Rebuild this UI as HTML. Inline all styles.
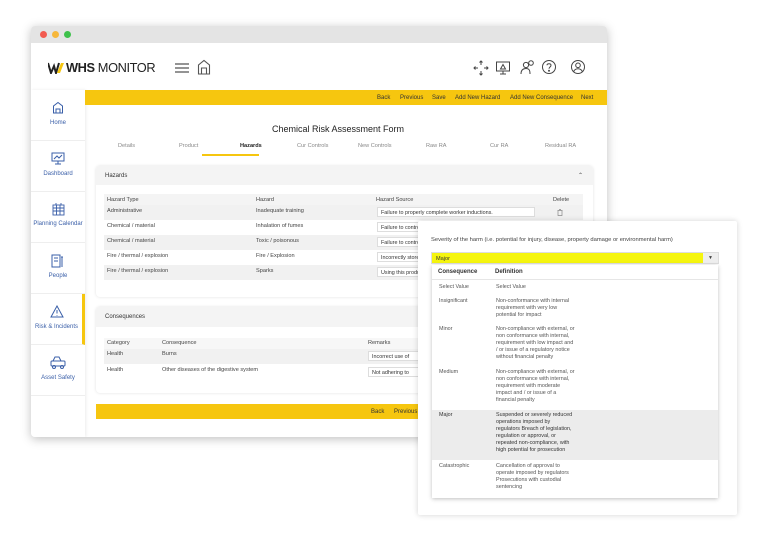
<!DOCTYPE html>
<html><head><meta charset="utf-8"><style>
*{margin:0;padding:0;box-sizing:border-box}
body{width:768px;height:541px;background:#fff;font-family:"Liberation Sans",sans-serif;position:relative;overflow:hidden;color:#444}
.a{position:absolute;white-space:nowrap}
.win{position:absolute;left:31px;top:26px;width:576px;height:411px;background:#fff;box-shadow:0 2px 10px rgba(0,0,0,.25);border-radius:4px;overflow:hidden}
.tb{position:absolute;left:0;top:0;width:576px;height:17px;background:#e4e4e4}
.dot{position:absolute;top:5px;width:7px;height:7px;border-radius:50%}
.side{position:absolute;left:0;top:64px;width:54px;height:347px;background:#fff;box-shadow:1px 0 3px rgba(0,0,0,.08)}
.si{position:absolute;left:0;width:54px;height:51px;border-bottom:1px solid #eee;text-align:center;font-size:6px;color:#3a5fa8}
.si span{position:absolute;left:0;right:0;bottom:14px}
.ybar{position:absolute;background:#f6c60f;font-size:6px;color:#333}
.card{position:absolute;background:#fff;border-radius:4px;box-shadow:0 0 3px rgba(0,0,0,.12)}
.ch{position:absolute;left:0;top:0;right:0;height:19px;background:#f4f4f4;font-size:6px;color:#333;padding:7px 0 0 9px;border-radius:4px 4px 0 0}
.t{font-size:5.6px;color:#444}
.row{position:absolute;left:8px;width:479px;height:15px;background:#f1f1f1}
.inp{position:absolute;height:10px;background:#fff;border:1px solid #ddd;font-size:5.4px;padding:2px 3px;color:#333;overflow:hidden;white-space:nowrap}
.pop{position:absolute;left:418px;top:221px;width:319px;height:294px;background:#fff;box-shadow:0 0 6px rgba(0,0,0,.18);border-radius:2px}
.dd{position:absolute;left:14px;top:44px;width:286px;height:233px;background:#fff;box-shadow:0 1px 4px rgba(0,0,0,.25)}
.p{font-size:5.4px;color:#555;line-height:7.1px}
</style></head><body>
<div class="win">
 <div class="tb"><div class="dot" style="left:9px;background:#f25b50"></div><div class="dot" style="left:21px;background:#f6b73b"></div><div class="dot" style="left:33px;background:#3ec14b"></div></div>
 <svg class="a" style="left:17px;top:36px" width="16" height="12" viewBox="0 0 16 12"><path d="M0 1 L3 11 L6 4 L8 11 L11 1" fill="none" stroke="#222" stroke-width="2"/><path d="M9 11 L13 1 L16 1 L12 11Z" fill="#f6c60f"/></svg>
 <div class="a" style="left:35px;top:34px;font-size:12.8px;color:#222;letter-spacing:-.4px"><b>WHS</b> MONITOR</div>
 <svg class="a" style="left:143px;top:36px" width="16" height="12"><path d="M1 2H15M1 6H15M1 10H15" stroke="#555" stroke-width="1.2"/></svg>
 <svg class="a" style="left:166px;top:33px" width="14" height="16"><path d="M1.5 15V6L7 1.5 12.5 6V15ZM4.5 15V9H9.5V15" fill="none" stroke="#555" stroke-width="1.1"/></svg>
 <svg class="a" style="left:442px;top:34px" width="16" height="16" fill="none" stroke="#444" stroke-width="1"><path d="M8 1V5M8 11V15M1 8H5M11 8H15M6.5 2.5 8 1 9.5 2.5M6.5 13.5 8 15 9.5 13.5M2.5 6.5 1 8 2.5 9.5M13.5 6.5 15 8 13.5 9.5"/></svg>
 <svg class="a" style="left:464px;top:34px" width="16" height="16" fill="none" stroke="#444" stroke-width="1"><rect x="1.5" y="2" width="13" height="9"/><path d="M8 11V14M5 14H11M8 4.5 10.5 9H5.5Z"/></svg>
 <svg class="a" style="left:488px;top:33px" width="16" height="16" fill="none" stroke="#444" stroke-width="1"><circle cx="7" cy="6" r="2.6"/><path d="M2 15C2 11 4 9.5 7 9.5S11 11 11 15"/><circle cx="12" cy="4" r="2.3"/></svg>
 <svg class="a" style="left:510px;top:33px" width="16" height="16" fill="none" stroke="#444" stroke-width="1"><circle cx="8" cy="8" r="6.5"/><path d="M6 6.3C6 4.3 10 4.3 10 6.3 10 8 8 8 8 9.8"/><circle cx="8" cy="11.8" r=".5" fill="#444"/></svg>
 <svg class="a" style="left:539px;top:33px" width="16" height="16" fill="none" stroke="#444" stroke-width="1"><circle cx="8" cy="8" r="6.5"/><circle cx="8" cy="6.3" r="2.3"/><path d="M3.6 12.6C4.6 10.5 6 9.8 8 9.8S11.4 10.5 12.4 12.6"/></svg>
 <div class="side">
  <div class="si" style="top:0"><svg style="margin-top:11px" width="12" height="13" fill="none" stroke="#3a5fa8" stroke-width="1"><path d="M1.5 12V5L6 1.5 10.5 5V12ZM4 12V8H8V12"/></svg><span>Home</span></div>
  <div class="si" style="top:51px"><svg style="margin-top:11px" width="14" height="13" fill="none" stroke="#3a5fa8" stroke-width="1"><rect x="1" y="1" width="12" height="8"/><path d="M7 9V12M4 12H10M3 7 6 4 8 6 11 3"/></svg><span>Dashboard</span></div>
  <div class="si" style="top:102px"><svg style="margin-top:11px" width="13" height="13" fill="none" stroke="#3a5fa8" stroke-width=".9"><rect x="1" y="2" width="11" height="10"/><path d="M1 5H12M1 8H12M4.5 2V12M8 2V12M4 0V2M9 0V2"/></svg><span style="bottom:15px">Planning Calendar</span></div>
  <div class="si" style="top:153px"><svg style="margin-top:11px" width="14" height="14" fill="none" stroke="#3a5fa8" stroke-width="1"><rect x="1" y="1" width="8" height="12"/><path d="M3 4H7M3 7H7M11 3V13M10 3H12"/></svg><span>People</span></div>
  <div class="si" style="top:204px;border-right:3px solid #f6c60f"><svg style="margin-top:11px" width="14" height="13" fill="none" stroke="#3a5fa8" stroke-width="1"><path d="M7 1 13 12H1Z"/><path d="M7 5V8.5M7 10V10.6"/></svg><span>Risk &amp; Incidents</span></div>
  <div class="si" style="top:255px"><svg style="margin-top:11px" width="16" height="13" fill="none" stroke="#3a5fa8" stroke-width="1"><rect x="1" y="5" width="14" height="5" rx="1"/><circle cx="4" cy="11" r="1.5"/><circle cx="12" cy="11" r="1.5"/><path d="M3 5 5 1H9L11 5"/></svg><span>Asset Safety</span></div>
 </div>
 <div class="ybar" style="left:54px;top:64px;width:522px;height:15px">
  <span class="a" style="left:292px;top:5px">Back</span><span class="a" style="left:315px;top:5px">Previous</span><span class="a" style="left:347px;top:5px">Save</span><span class="a" style="left:370px;top:5px">Add New Hazard</span><span class="a" style="left:425px;top:5px">Add New Consequence</span><span class="a" style="left:496px;top:5px">Next</span>
 </div>
 <div class="a" style="left:241px;top:98px;font-size:9px;color:#222">Chemical Risk Assessment Form</div>
 <div class="a t" style="left:87px;top:117px;color:#888">Details</div>
 <div class="a t" style="left:148px;top:117px;color:#888">Product</div>
 <div class="a t" style="left:209px;top:117px;color:#222;font-weight:bold">Hazards</div>
 <div class="a" style="left:171px;top:128px;width:57px;height:1.5px;background:#f6c60f"></div>
 <div class="a t" style="left:266px;top:117px;color:#888">Cur Controls</div>
 <div class="a t" style="left:327px;top:117px;color:#888">New Controls</div>
 <div class="a t" style="left:395px;top:117px;color:#888">Raw RA</div>
 <div class="a t" style="left:459px;top:117px;color:#888">Cur RA</div>
 <div class="a t" style="left:514px;top:117px;color:#888">Residual RA</div>
 <div class="card" style="left:65px;top:140px;width:497px;height:131px">
  <div class="ch">Hazards</div>
  <div class="a" style="right:10px;top:6px;font-size:6px">&#8963;</div>
  <div class="a" style="left:8px;top:28px;width:479px;height:11px;background:#f4f4f4"></div>
  <div class="a t" style="left:11px;top:31px">Hazard Type</div><div class="a t" style="left:160px;top:31px">Hazard</div><div class="a t" style="left:280px;top:31px">Hazard Source</div><div class="a t" style="left:457px;top:31px">Delete</div>
  <div class="row" style="top:39px"></div><div class="a t" style="left:11px;top:42px">Administrative</div><div class="a t" style="left:160px;top:42px">Inadequate training</div><div class="inp" style="left:281px;top:41px;width:158px">Failure to properly complete worker inductions.</div><svg class="a" style="left:461px;top:43px" width="6" height="7" fill="none" stroke="#888" stroke-width=".7"><path d="M.5 1.5H5.5M1 1.5V6.5H5V1.5M2 .5H4"/></svg>
  <div class="a t" style="left:11px;top:57px">Chemical / material</div><div class="a t" style="left:160px;top:57px">Inhalation of fumes</div><div class="inp" style="left:281px;top:56px;width:158px">Failure to control</div>
  <div class="row" style="top:69px"></div><div class="a t" style="left:11px;top:72px">Chemical / material</div><div class="a t" style="left:160px;top:72px">Toxic / poisonous</div><div class="inp" style="left:281px;top:71px;width:158px">Failure to control</div>
  <div class="a t" style="left:11px;top:87px">Fire / thermal / explosion</div><div class="a t" style="left:160px;top:87px">Fire / Explosion</div><div class="inp" style="left:281px;top:86px;width:158px">Incorrectly stored</div>
  <div class="row" style="top:99px"></div><div class="a t" style="left:11px;top:102px">Fire / thermal / explosion</div><div class="a t" style="left:160px;top:102px">Sparks</div><div class="inp" style="left:281px;top:101px;width:158px">Using this product</div>
 </div>
 <div class="card" style="left:65px;top:281px;width:497px;height:86px">
  <div class="ch" style="height:20px">Consequences</div>
  <div class="a" style="left:8px;top:31px;width:479px;height:11px;background:#f7f7f7"></div>
  <div class="a t" style="left:11px;top:33px">Category</div><div class="a t" style="left:66px;top:33px">Consequence</div><div class="a t" style="left:272px;top:33px">Remarks</div>
  <div class="row" style="top:42px;height:15px"></div><div class="a t" style="left:11px;top:44px">Health</div><div class="a t" style="left:66px;top:44px">Burns</div><div class="inp" style="left:272px;top:44px;width:158px">Incorrect use of</div>
  <div class="a t" style="left:11px;top:60px">Health</div><div class="a t" style="left:66px;top:60px">Other diseases of the digestive system</div><div class="inp" style="left:272px;top:60px;width:158px">Not adhering to</div>
 </div>
 <div class="ybar" style="left:65px;top:378px;width:497px;height:15px"><span class="a" style="left:275px;top:5px">Back</span><span class="a" style="left:298px;top:5px">Previous</span></div>
</div>
<div class="pop">
 <div class="a" style="left:13px;top:16px;font-size:5.8px;color:#444">Severity of the harm (i.e. potential for injury, disease, property damage or environmental harm)</div>
 <div class="a" style="left:13px;top:31px;width:288px;height:12px;background:#f5f50f;border:1px solid #ddd"><span class="a" style="left:4px;top:3px;font-size:5.6px;color:#333">Major</span><div class="a" style="right:0;top:0;width:15px;height:10px;background:#eee;font-size:5px;text-align:center;line-height:10px">&#9660;</div></div>
 <div class="dd">
  <div class="a" style="left:0;top:0;width:286px;height:15px;border-bottom:1px solid #e6e6e6"></div>
  <div class="a" style="left:6px;top:4px;font-size:6px;font-weight:bold;color:#333">Consequence</div><div class="a" style="left:63px;top:4px;font-size:6px;font-weight:bold;color:#333">Definition</div>
  <div class="a p" style="left:7px;top:19px">Select Value</div><div class="a p" style="left:64px;top:19px">Select Value</div>
  <div class="a p" style="left:7px;top:33px">Insignificant</div><div class="a p" style="left:64px;top:33px">Non-conformance with internal<br>requirement with very low<br>potential for impact</div>
  <div class="a p" style="left:7px;top:61px">Minor</div><div class="a p" style="left:64px;top:61px">Non-compliance with external, or<br>non conformance with internal,<br>requirement with low impact and<br>/ or issue of a regulatory notice<br>without financial penalty</div>
  <div class="a p" style="left:7px;top:104px">Medium</div><div class="a p" style="left:64px;top:104px">Non-compliance with external, or<br>non conformance with internal,<br>requirement with moderate<br>impact and / or issue of a<br>financial penalty</div>
  <div class="a" style="left:0;top:145px;width:286px;height:50px;background:#ececec"></div>
  <div class="a p" style="left:7px;top:147px;color:#333">Major</div><div class="a p" style="left:64px;top:147px;color:#333">Suspended or severely reduced<br>operations imposed by<br>regulators Breach of legislation,<br>regulation or approval, or<br>repeated non-compliance, with<br>high potential for prosecution</div>
  <div class="a p" style="left:7px;top:198px">Catastrophic</div><div class="a p" style="left:64px;top:198px">Cancellation of approval to<br>operate imposed by regulators<br>Prosecutions with custodial<br>sentencing</div>
 </div>
</div>
</body></html>
